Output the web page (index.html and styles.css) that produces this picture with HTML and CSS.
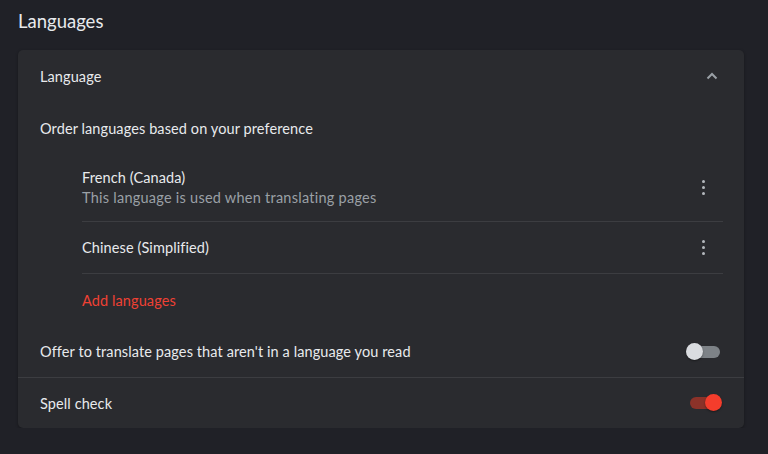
FILE: index.html
```html
<!DOCTYPE html>
<html lang="en">
<head>
<meta charset="utf-8">
<title>Languages</title>
<link rel="stylesheet" href="styles.css">
</head>
<body>
<main class="page">
  <h2 class="page-title">Languages</h2>
  <section class="card">
    <div class="row row-header">
      <span class="label">Language</span>
      <svg class="chevron" width="14" height="14" viewBox="0 0 14 14"><path d="M2.5 9.5 L7 5 L11.5 9.5" fill="none" stroke="#9aa0a6" stroke-width="2"/></svg>
    </div>
    <div class="row">
      <span class="label">Order languages based on your preference</span>
    </div>
    <ul class="lang-list">
      <li class="lang-item two-line">
        <div class="lang-text">
          <span class="label">French (Canada)</span>
          <span class="sub">This language is used when translating pages</span>
        </div>
        <span class="kebab"><i></i><i></i><i></i></span>
      </li>
      <li class="lang-item">
        <div class="lang-text">
          <span class="label">Chinese (Simplified)</span>
        </div>
        <span class="kebab"><i></i><i></i><i></i></span>
      </li>
      <li class="lang-add">
        <span class="link">Add languages</span>
      </li>
    </ul>
    <div class="row row-offer">
      <span class="label">Offer to translate pages that aren't in a language you read</span>
      <span class="toggle"><span class="track"></span><span class="knob"></span></span>
    </div>
    <div class="row row-sep">
      <span class="label">Spell check</span>
      <span class="toggle on"><span class="track"></span><span class="knob"></span></span>
    </div>
  </section>
</main>
</body>
</html>
```
FILE: styles.css
```css
html, body {
  margin: 0;
  padding: 0;
  background: #202127;
}
body {
  font-family: Lato, "Noto Sans", sans-serif;
  color: #e8eaed;
  font-size: 14.5px;
}
.page {
  padding: 11px 24px 0 18px;
}
.page-title {
  margin: 0;
  font-size: 18.5px;
  font-weight: 400;
  line-height: 20px;
  color: #e8eaed;
}
.card {
  margin-top: 19px;
  width: 726px;
  background: #2a2b2f;
  border-radius: 5px;
  box-shadow: 0 1px 3px rgba(0,0,0,0.35);
}
.row {
  height: 52px;
  display: flex;
  align-items: center;
  justify-content: space-between;
  padding: 0 22px 0 22px;
}
.row-offer {
  height: 51px;
}
.row-sep {
  border-top: 1px solid #3c3d41;
  height: 50px;
}
.label {
  font-size: 14.5px;
  letter-spacing: 0.1px;
  color: #e8eaed;
}
.chevron {
  margin-right: 3px;
}
.lang-list {
  list-style: none;
  margin: 0 21px 0 64px;
  padding: 0;
}
.lang-item {
  display: flex;
  align-items: center;
  justify-content: space-between;
  height: 51px;
  border-bottom: 1px solid #3c3d41;
}
.lang-item.two-line {
  height: 67px;
}
.lang-text {
  display: flex;
  flex-direction: column;
  gap: 3px;
}
.sub {
  font-size: 14.5px;
  letter-spacing: 0.25px;
  color: #9aa0a6;
}
.kebab {
  display: flex;
  flex-direction: column;
  gap: 2.6px;
  margin-right: 18px;
}
.kebab i {
  display: block;
  width: 3.4px;
  height: 3.4px;
  border-radius: 50%;
  background: #b4b8bd;
}
.lang-add {
  height: 52px;
  display: flex;
  align-items: center;
}
.link {
  color: #ef4134;
  font-size: 14.5px;
  letter-spacing: 0.1px;
}
.toggle {
  position: relative;
  width: 36px;
  height: 18px;
  flex: none;
}
.toggle .track {
  position: absolute;
  left: 1px;
  top: 3px;
  width: 33px;
  height: 12px;
  border-radius: 6px;
  background: #9aa0a6;
  opacity: 0.75;
}
.toggle .knob {
  position: absolute;
  left: 0;
  top: 0;
  width: 17px;
  height: 17px;
  border-radius: 50%;
  background: #dadce0;
  box-shadow: 0 1px 2px rgba(0,0,0,0.4);
}
.toggle.on .track {
  left: 4px;
  width: 30px;
  background: #8b3229;
  opacity: 1;
}
.toggle.on .knob {
  left: 19px;
  background: #f43d2c;
}
```
